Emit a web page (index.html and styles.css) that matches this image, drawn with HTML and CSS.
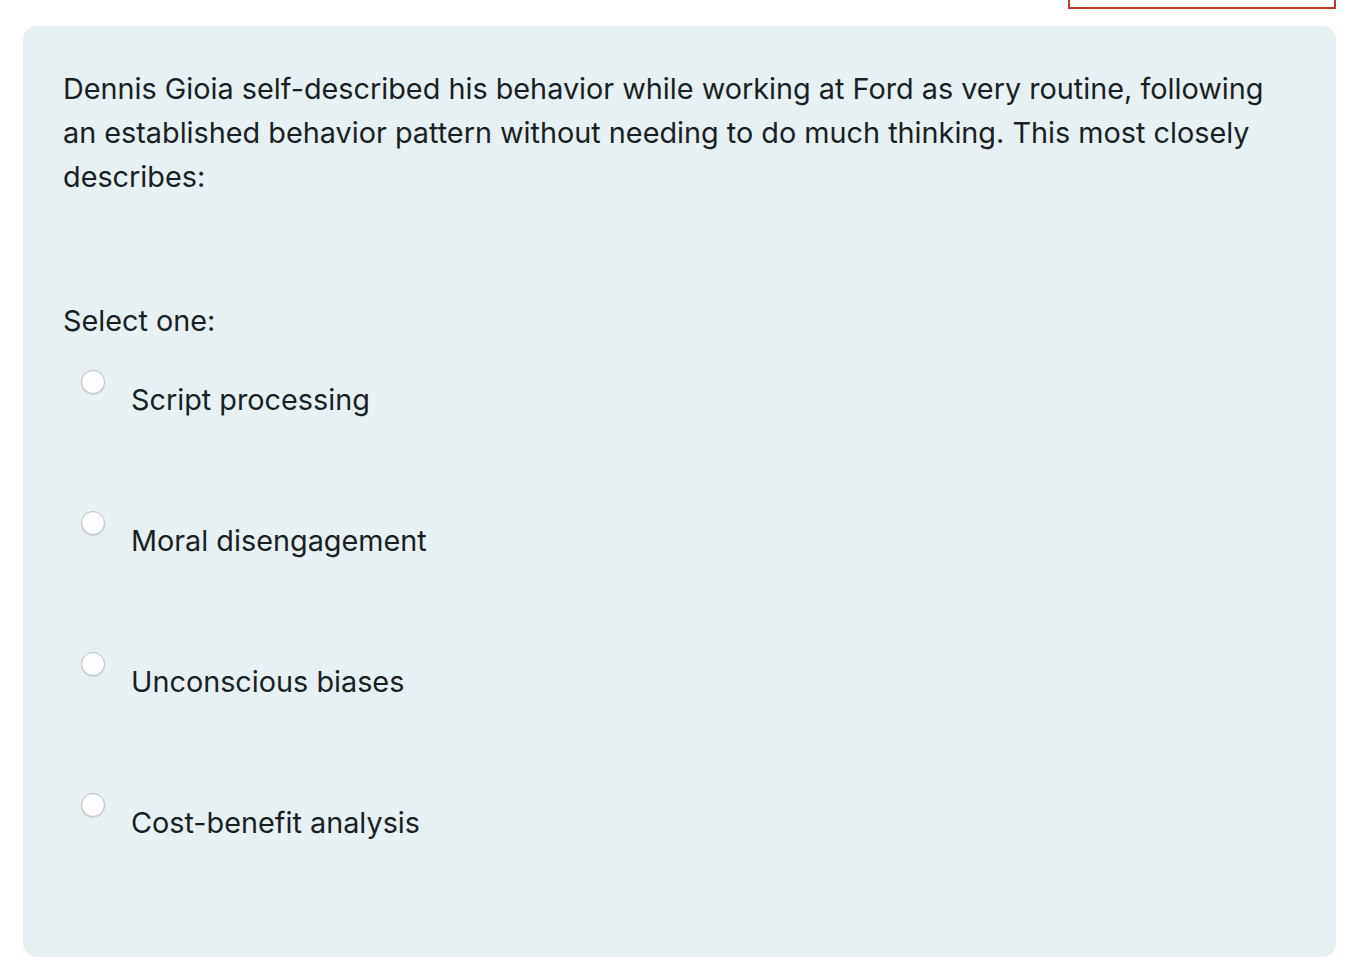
FILE: index.html
```html
<!DOCTYPE html>
<html>
<head>
<meta charset="utf-8">
<link rel="stylesheet" href="styles.css">
</head>
<body>
<div class="topbar"><div class="flagbox"></div></div>
<div class="card">
  <div class="qtext">Dennis Gioia self-described his behavior while working at Ford as very routine, following an established behavior pattern without needing to do much thinking. This most closely describes:</div>
  <div class="prompt">Select one:</div>
  <div class="answers">
    <div class="option"><span class="radio"></span><span class="label">Script processing</span></div>
    <div class="option"><span class="radio"></span><span class="label">Moral disengagement</span></div>
    <div class="option"><span class="radio"></span><span class="label">Unconscious biases</span></div>
    <div class="option"><span class="radio"></span><span class="label">Cost-benefit analysis</span></div>
  </div>
</div>
</body>
</html>
```
FILE: styles.css
```css
html, body {
  margin: 0;
  padding: 0;
  background: #ffffff;
}
body {
  font-family: Inter, "Noto Sans", sans-serif;
  color: #1a1f23;
  width: 1350px;
  height: 961px;
  overflow: hidden;
}
.topbar {
  height: 26px;
  position: relative;
}
.flagbox {
  position: absolute;
  left: 1068px;
  top: -20px;
  width: 264px;
  height: 27px;
  border: 2px solid #c0392b;
  border-top: none;
}
.card {
  margin-left: 23px;
  width: 1313px;
  height: 931px;
  box-sizing: border-box;
  background: #e7f0f3;
  border-radius: 14px;
  padding: 41px 40px 0 40px;
}
.qtext {
  font-size: 28.8px;
  line-height: 44px;
  width: 1215px;
}
.prompt {
  margin-top: 100px;
  font-size: 28.8px;
  line-height: 44px;
}
.answers {
  margin-top: 18px;
}
.option {
  display: flex;
  align-items: flex-start;
  height: 141px;
}
.radio {
  width: 22px;
  height: 22px;
  border-radius: 50%;
  background: #ffffff;
  border: 1px solid #b8bec4;
  box-shadow: 0 1px 1px rgba(0,0,0,0.1);
  margin: 9px 0 0 18px;
  flex: none;
}
.label {
  margin-left: 26px;
  padding-top: 17px;
  font-size: 28.8px;
  line-height: 44px;
}
```
